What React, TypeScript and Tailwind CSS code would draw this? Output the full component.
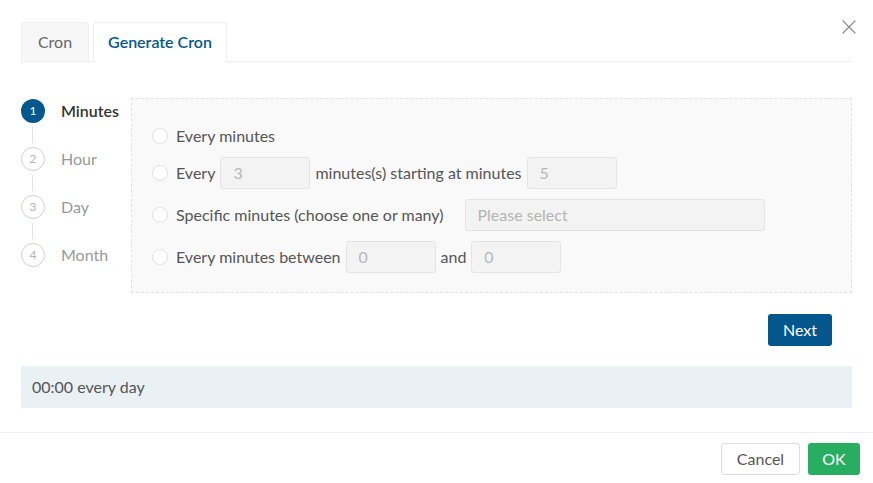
import { X } from "lucide-react";

type Step = { n: number; label: string };

const steps: Step[] = [
  { n: 1, label: "Minutes" },
  { n: 2, label: "Hour" },
  { n: 3, label: "Day" },
  { n: 4, label: "Month" },
];

function Radio() {
  return <span className="w-4 h-4 mr-[3px] rounded-full border border-[#e2e2e2] bg-white shrink-0" />;
}

function Field({ value, w = "w-[90px]", placeholder = false }: { value: string; w?: string; placeholder?: boolean }) {
  return (
    <div
      className={`${w} h-[32px] shrink-0 flex items-center px-3 bg-[#f3f3f3] border border-[#e4e4e4] rounded-[3px] ${
        placeholder ? "text-[#b4b4b4]" : "text-[#b8b8b8]"
      }`}
    >
      {value}
    </div>
  );
}

export default function App() {
  return (
    <div className="relative w-[873px] h-[483px] bg-white text-[16px] text-[#555] font-['Lato','Liberation_Sans',sans-serif]">
      {/* Close */}
      <button className="absolute top-[15px] right-[12px] text-[#8a8a8a]">
        <X size={24} strokeWidth={1.2} />
      </button>

      {/* Tabs */}
      <div className="pt-[22px] px-[21px]">
        <div className="flex gap-1 border-b border-[#eeeeee]">
          <div className="w-[68px] h-[40px] -mb-px flex items-center justify-center bg-[#f7f7f7] border border-[#eeeeee] rounded-t-[3px] text-[#666]">
            Cron
          </div>
          <div className="w-[134px] h-[40px] -mb-px flex items-center justify-center bg-white border border-[#eeeeee] border-b-white rounded-t-[3px] text-[#04578c] font-semibold">
            Generate Cron
          </div>
        </div>
      </div>

      {/* Body */}
      <div className="px-[21px] pt-[36px]">
        <div className="flex">
          {/* Steps */}
          <div className="w-[110px] pt-px flex flex-col">
            {steps.map((s, i) => (
              <div key={s.n}>
                <div className="flex items-center h-[24px]">
                  {s.n === 1 ? (
                    <span className="w-6 h-6 rounded-full bg-[#04578c] text-white text-[12px] flex items-center justify-center">
                      {s.n}
                    </span>
                  ) : (
                    <span className="w-6 h-6 rounded-full border border-[#cfcfcf] text-[#b5b5b5] text-[12px] flex items-center justify-center">
                      {s.n}
                    </span>
                  )}
                  <span className={`ml-4 ${s.n === 1 ? "text-[#333] font-semibold" : "text-[#999]"}`}>
                    {s.label}
                  </span>
                </div>
                {i < steps.length - 1 && <div className="ml-[11px] w-px h-4 my-1 bg-[#e2e2e2]" />}
              </div>
            ))}
          </div>

          {/* Options */}
          <div className="flex-1 h-[195px] border border-dashed border-[#e2e2e2] bg-[#f9f9f9] pl-[20px] pt-[21px]">
            <div className="flex items-center gap-[5px] h-[32px]">
              <Radio />
              <span>Every minutes</span>
            </div>
            <div className="flex items-center gap-[5px] h-[32px] mt-[5px]">
              <Radio />
              <span>Every</span>
              <Field value="3" />
              <span>minutes(s) starting at minutes</span>
              <Field value="5" />
            </div>
            <div className="flex items-center gap-[5px] h-[32px] mt-[10px]">
              <Radio />
              <span className="mr-[16px]">Specific minutes (choose one or many)</span>
              <Field value="Please select" w="w-[300px]" placeholder />
            </div>
            <div className="flex items-center gap-[5px] h-[32px] mt-[10px]">
              <Radio />
              <span>Every minutes between</span>
              <Field value="0" />
              <span>and</span>
              <Field value="0" />
            </div>
          </div>
        </div>

        <div className="flex justify-end pr-[20px] mt-[21px]">
          <button className="w-[64px] h-[32px] bg-[#04578c] text-white rounded-[3px]">Next</button>
        </div>

        <div className="mt-[20px] h-[42px] flex items-center pl-[11px] bg-[#eaf1f5] text-[#555]">
          00:00 every day
        </div>
      </div>

      {/* Footer */}
      <div className="mt-[24px] border-t border-[#eeeeee] flex justify-end gap-2 pt-[10px] pr-[13px]">
        <button className="w-[79px] h-[32px] border border-[#dddddd] rounded-[3px] bg-white text-[#555]">Cancel</button>
        <button className="w-[52px] h-[32px] rounded-[3px] bg-[#27ae60] text-white">OK</button>
      </div>
    </div>
  );
}
